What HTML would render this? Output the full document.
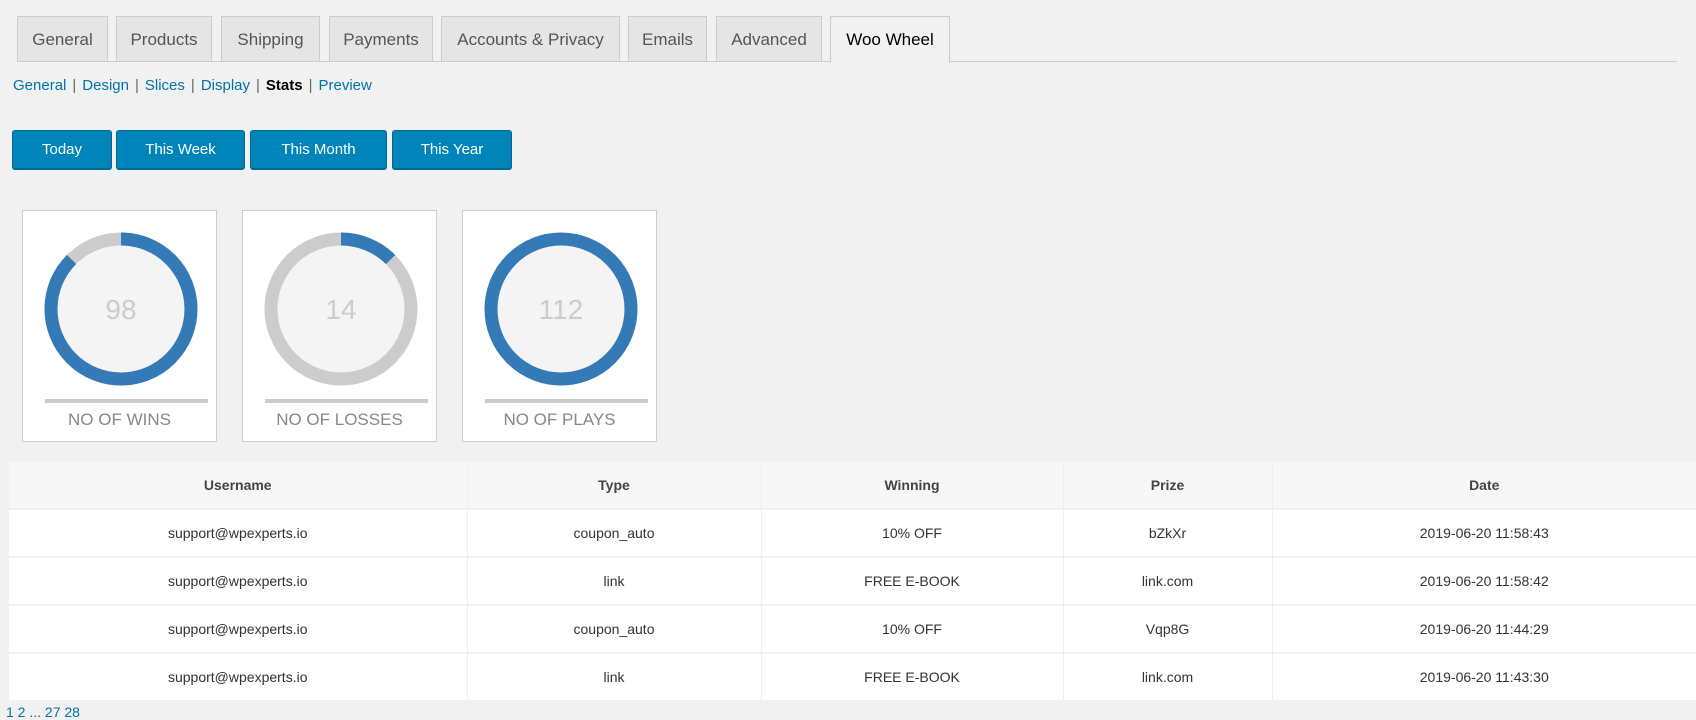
<!DOCTYPE html>
<html><head><meta charset="utf-8"><style>
body{margin:0;width:1696px;height:710px;background:#f1f1f1;font-family:"Liberation Sans",sans-serif;position:relative;overflow:hidden;color:#444}
.tab{position:absolute;top:16px;height:45px;background:#e5e5e5;border:1px solid #ccc;border-bottom:none;box-sizing:border-box;font-size:17px;color:#555;text-align:center;line-height:45px}
.tab.a{background:#f1f1f1;color:#000;height:47px}
.line{position:absolute;left:17px;top:61px;width:1660px;height:1px;background:#ccc}
.sub{position:absolute;left:13px;top:77px;font-size:15px;color:#0073aa}
.sub b{color:#000}.sub span{color:#666;margin:0 6px 0 6px}
.btn{position:absolute;top:130px;height:39px;background:#0085ba;border:1px solid #006799;border-radius:3px;box-sizing:border-box;color:#fff;font-size:15px;text-align:center;line-height:38px;box-shadow:0 1px 0 #006799}
.card{position:absolute;top:210px;width:195px;height:232px;background:#fff;border:1px solid #ccc;box-sizing:border-box}
.card svg{position:absolute;left:0;top:0}
.bar{position:absolute;left:22px;top:188px;width:163px;height:4px;background:#ccc}
.lab{position:absolute;left:0;width:100%;top:199px;text-align:center;font-size:17px;color:#888}
table{position:absolute;left:9px;top:462px;width:1687px;border-collapse:collapse;font-size:14px;color:#333}
td,th{text-align:center;border-left:1px solid #eee;height:46px;padding:0}
td:first-child,th:first-child{border-left:none}
th{background:#f7f7f7;font-weight:bold;color:#444;height:46px}
tr{border-top:2px solid #f0f0f0}
tr.r td{background:#fff}
</style></head><body>
<div class="tab" style="left:17px;width:91px">General</div>
<div class="tab" style="left:116px;width:96px">Products</div>
<div class="tab" style="left:221px;width:99px">Shipping</div>
<div class="tab" style="left:329px;width:104px">Payments</div>
<div class="tab" style="left:441px;width:179px">Accounts &amp; Privacy</div>
<div class="tab" style="left:628px;width:79px">Emails</div>
<div class="tab" style="left:716px;width:106px">Advanced</div>
<div class="line"></div>
<div class="tab a" style="left:830px;width:120px">Woo Wheel</div>
<div class="sub">General<span>|</span>Design<span>|</span>Slices<span>|</span>Display<span>|</span><b>Stats</b><span>|</span>Preview</div>
<div class="btn" style="left:12px;width:100px">Today</div>
<div class="btn" style="left:116px;width:129px">This Week</div>
<div class="btn" style="left:250px;width:137px">This Month</div>
<div class="btn" style="left:392px;width:120px">This Year</div>

<div class="card" style="left:22px"><svg width="195" height="200"><circle cx="98" cy="98" r="70" fill="#f4f4f4" stroke="#ccc" stroke-width="13"/><circle cx="98" cy="98" r="70" fill="none" stroke="#337ab7" stroke-width="13" stroke-dasharray="384.8 439.8" transform="rotate(-90 98 98)"/><text x="98" y="108" text-anchor="middle" font-size="28" fill="#ccc" font-family="Liberation Sans">98</text></svg><div class="bar"></div><div class="lab">NO OF WINS</div></div>
<div class="card" style="left:242px"><svg width="195" height="200"><circle cx="98" cy="98" r="70" fill="#f4f4f4" stroke="#ccc" stroke-width="13"/><circle cx="98" cy="98" r="70" fill="none" stroke="#337ab7" stroke-width="13" stroke-dasharray="55 439.8" transform="rotate(-90 98 98)"/><text x="98" y="108" text-anchor="middle" font-size="28" fill="#ccc" font-family="Liberation Sans">14</text></svg><div class="bar"></div><div class="lab">NO OF LOSSES</div></div>
<div class="card" style="left:462px"><svg width="195" height="200"><circle cx="98" cy="98" r="70" fill="#f4f4f4" stroke="#337ab7" stroke-width="13"/><text x="98" y="108" text-anchor="middle" font-size="28" fill="#ccc" font-family="Liberation Sans">112</text></svg><div class="bar"></div><div class="lab">NO OF PLAYS</div></div>

<table>
<colgroup><col style="width:458px"><col style="width:294px"><col style="width:302px"><col style="width:209px"><col></colgroup>
<tr style="border-top:none"><th>Username</th><th>Type</th><th>Winning</th><th>Prize</th><th>Date</th></tr>
<tr class="r"><td>support@wpexperts.io</td><td>coupon_auto</td><td>10% OFF</td><td>bZkXr</td><td>2019-06-20 11:58:43</td></tr>
<tr class="r"><td>support@wpexperts.io</td><td>link</td><td>FREE E-BOOK</td><td>link.com</td><td>2019-06-20 11:58:42</td></tr>
<tr class="r"><td>support@wpexperts.io</td><td>coupon_auto</td><td>10% OFF</td><td>Vqp8G</td><td>2019-06-20 11:44:29</td></tr>
<tr class="r"><td>support@wpexperts.io</td><td>link</td><td>FREE E-BOOK</td><td>link.com</td><td>2019-06-20 11:43:30</td></tr>
</table>
<div style="position:absolute;left:6px;top:704px;font-size:14px;color:#0073aa">1 2 ... 27 28</div>
</body></html>
